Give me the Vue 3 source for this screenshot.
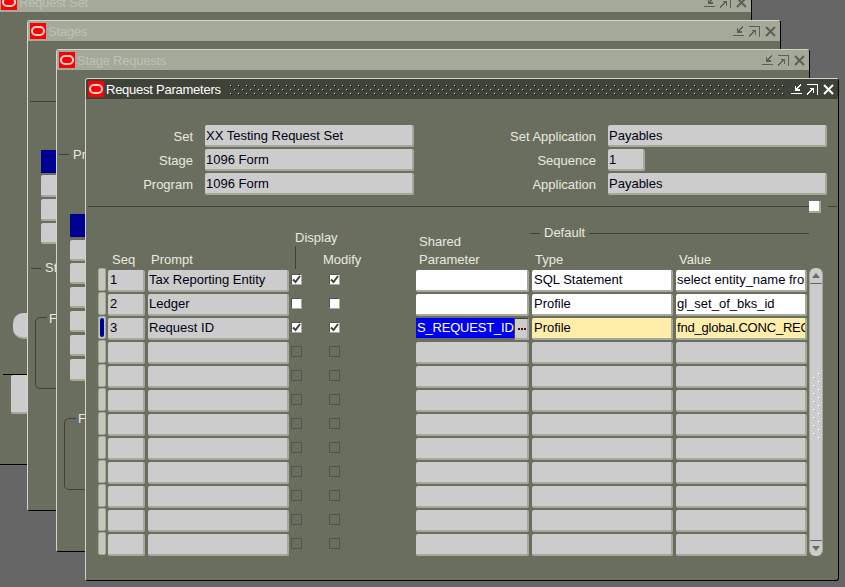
<template>
  <div class="desktop">
    <!-- windows stacked behind the active one -->
    <div v-for="win in backWindows" :key="win.title" class="window" :style="{ left: win.left + 'px', top: win.top + 'px', height: win.height + 'px' }">
      <div class="titlebar">
        <svg class="logo" width="16" height="16" viewBox="0 0 16 16"><rect width="16" height="16" fill="#ff0000" /><rect x="2" y="4" width="12" height="8" rx="4" fill="none" stroke="#ffd0d0" stroke-width="2" /></svg>
        <span class="title">{{ win.title }}</span>
        <div class="win-icons">
          <svg width="11" height="11" viewBox="0 0 11 11" shape-rendering="crispEdges"><path d="M0 9.5H11M10 0.5L5 5.5M4.5 2V6H8.5" fill="none" stroke="currentColor" stroke-width="1.4" /></svg>
          <svg width="11" height="11" viewBox="0 0 11 11" shape-rendering="crispEdges"><path d="M0 .5H10.5V11M0 10.5L6 4.5M2.5 4.5H6.5V8.5" fill="none" stroke="currentColor" stroke-width="1.4" /></svg>
          <svg width="11" height="11" viewBox="0 0 11 11"><path d="M1 1L10 10M10 1L1 10" fill="none" stroke="currentColor" stroke-width="2" /></svg>
        </div>
      </div>
      <div v-for="(bit, i) in win.bits" :key="i" :class="['bit', bit.kind]" :style="bitStyle(win, bit)">{{ bit.text }}</div>
    </div>

    <!-- active window -->
    <div class="window active">
      <div class="titlebar">
        <svg class="logo" width="16" height="16" viewBox="0 0 16 16"><rect width="16" height="16" fill="#ff0000" /><rect x="2" y="4" width="12" height="8" rx="4" fill="none" stroke="#ffd0d0" stroke-width="2" /></svg>
        <span class="title">Request Parameters</span>
        <svg class="drag-dots" height="11" shape-rendering="crispEdges">
          <defs>
            <pattern id="dragDots" width="8" height="8" patternUnits="userSpaceOnUse">
              <rect x="0" y="1" width="1" height="1" fill="#d8dacf" />
              <rect x="1" y="2" width="1" height="1" fill="#16170f" />
              <rect x="4" y="5" width="1" height="1" fill="#d8dacf" />
              <rect x="5" y="6" width="1" height="1" fill="#16170f" />
            </pattern>
          </defs>
          <rect width="100%" height="100%" fill="url(#dragDots)" />
        </svg>
        <div class="win-icons">
          <svg width="11" height="11" viewBox="0 0 11 11" shape-rendering="crispEdges"><path d="M0 9.5H11M10 0.5L5 5.5M4.5 2V6H8.5" fill="none" stroke="currentColor" stroke-width="1.4" /></svg>
          <svg width="11" height="11" viewBox="0 0 11 11" shape-rendering="crispEdges"><path d="M0 .5H10.5V11M0 10.5L6 4.5M2.5 4.5H6.5V8.5" fill="none" stroke="currentColor" stroke-width="1.4" /></svg>
          <svg width="11" height="11" viewBox="0 0 11 11"><path d="M1 1L10 10M10 1L1 10" fill="none" stroke="currentColor" stroke-width="2" /></svg>
        </div>
      </div>

      <div class="summary">
        <template v-for="row in summary" :key="row.label">
          <label class="prompt-label">{{ row.label }}</label>
          <div class="field">{{ row.value }}</div>
          <label class="prompt-label">{{ row.label2 }}</label>
          <div :class="['field', { short: row.short }]">{{ row.value2 }}</div>
        </template>
      </div>

      <div class="divider">
        <span class="divider-line"></span>
        <span class="divider-box"></span>
        <span class="divider-end"></span>
      </div>

      <div class="heads">
        <span class="head head-seq">Seq</span>
        <span class="head head-prompt">Prompt</span>
        <div class="head head-display">
          <span>Display</span>
          <i class="drop-line"></i>
        </div>
        <span class="head head-modify">Modify</span>
        <span class="head head-shared">Shared<br />Parameter</span>
        <div class="head head-default">
          <i class="rule short-rule"></i>
          <span>Default</span>
          <i class="rule"></i>
        </div>
        <span class="head head-type">Type</span>
        <span class="head head-value">Value</span>
      </div>

      <div class="table-wrap">
        <div class="table">
          <template v-for="(row, i) in rows" :key="i">
            <div :class="['indicator', { current: row.current }]"><i></i></div>
            <div class="field cell">{{ row.seq }}</div>
            <div class="field cell cell-prompt">{{ row.prompt }}</div>
            <div :class="['check', { off: !row.seq, ticked: row.display }]">
              <svg v-if="row.display" width="9" height="9" viewBox="0 0 9 9"><path d="M1 4.5L3.5 7L8 1" fill="none" stroke="#404238" stroke-width="2" /></svg>
            </div>
            <div :class="['check', { off: !row.seq, ticked: row.modify }]">
              <svg v-if="row.modify" width="9" height="9" viewBox="0 0 9 9"><path d="M1 4.5L3.5 7L8 1" fill="none" stroke="#404238" stroke-width="2" /></svg>
            </div>
            <div v-if="row.current" class="shared-edit">
              <span class="selected">{{ row.shared }}</span>
              <span class="lov">
                <svg width="9" height="3" viewBox="0 0 9 3" shape-rendering="crispEdges"><path d="M1 1h2v2h-2zM4 1h2v2h-2zM7 1h2v2h-2z" fill="#660000" /></svg>
              </span>
            </div>
            <div v-else :class="['field', 'cell', { live: row.seq }]"></div>
            <div :class="['field', 'cell', { live: row.seq, hot: row.current }]">{{ row.type }}</div>
            <div :class="['field', 'cell', 'cell-value', { live: row.seq, hot: row.current }]">{{ row.value }}</div>
          </template>
        </div>

        <div class="scrollbar">
          <div class="scroll-btn up"><i class="arrow-up"></i></div>
          <div class="scroll-track">
            <svg class="grip" width="10" height="68" shape-rendering="crispEdges">
              <defs>
                <pattern id="gripDots" width="10" height="8" patternUnits="userSpaceOnUse">
                  <rect x="5" y="0" width="2" height="2" fill="#f4f4f4" />
                  <rect x="6" y="1" width="1" height="1" fill="#8c8c8c" />
                  <rect x="0" y="4" width="2" height="2" fill="#f4f4f4" />
                  <rect x="1" y="5" width="1" height="1" fill="#8c8c8c" />
                </pattern>
              </defs>
              <rect width="100%" height="100%" fill="url(#gripDots)" />
            </svg>
          </div>
          <div class="scroll-btn down"><i class="arrow-down"></i></div>
        </div>
      </div>
    </div>
  </div>
</template>

<script setup>
const backWindows = [
  {
    title: 'Request Set', left: -2, top: -9, height: 474,
    bits: [
      { kind: 'field round', x: 13, y: 313, w: 40, h: 26 },
      { kind: 'blackline', x: 3, y: 374, w: 60, h: 1 },
      { kind: 'field', x: 11, y: 375, w: 40, h: 39 }
    ]
  },
  {
    title: 'Stages', left: 27, top: 20, height: 491,
    bits: [
      { kind: 'line', x: 30, y: 101, w: 40, h: 1 },
      { kind: 'blue', x: 41, y: 150, w: 40, h: 23 },
      { kind: 'field', x: 41, y: 175, w: 40, h: 22 },
      { kind: 'field', x: 41, y: 199, w: 40, h: 22 },
      { kind: 'field', x: 41, y: 223, w: 40, h: 21 },
      { kind: 'line', x: 31, y: 268, w: 10, h: 1 },
      { kind: 'label', x: 43, y: 260, w: 20, h: 16, text: 'St' },
      { kind: 'frame', x: 35, y: 317, w: 60, h: 72 },
      { kind: 'label', x: 47, y: 311, w: 20, h: 16, text: 'F' }
    ]
  },
  {
    title: 'Stage Requests', left: 56, top: 49, height: 503,
    bits: [
      { kind: 'line', x: 59, y: 154, w: 10, h: 1 },
      { kind: 'label', x: 71, y: 147, w: 20, h: 16, text: 'Pr' },
      { kind: 'blue', x: 70, y: 214, w: 40, h: 23 },
      { kind: 'field', x: 70, y: 240, w: 40, h: 21 },
      { kind: 'field', x: 70, y: 263, w: 40, h: 21 },
      { kind: 'field', x: 70, y: 287, w: 40, h: 21 },
      { kind: 'field', x: 70, y: 311, w: 40, h: 21 },
      { kind: 'field', x: 70, y: 335, w: 40, h: 21 },
      { kind: 'field', x: 70, y: 359, w: 40, h: 22 },
      { kind: 'frame', x: 64, y: 418, w: 60, h: 72 },
      { kind: 'label', x: 76, y: 411, w: 20, h: 16, text: 'F' }
    ]
  }
]

// bits are noted in page coordinates, the window border is 1px
function bitStyle(win, bit) {
  return {
    left: bit.x - win.left - 1 + 'px',
    top: bit.y - win.top - 1 + 'px',
    width: bit.w + 'px',
    height: bit.h + 'px'
  }
}

const summary = [
  { label: 'Set', value: 'XX Testing Request Set', label2: 'Set Application', value2: 'Payables' },
  { label: 'Stage', value: '1096 Form', label2: 'Sequence', value2: '1', short: true },
  { label: 'Program', value: '1096 Form', label2: 'Application', value2: 'Payables' }
]

const filled = [
  { seq: '1', prompt: 'Tax Reporting Entity', display: true, modify: true, type: 'SQL Statement', value: 'select entity_name from' },
  { seq: '2', prompt: 'Ledger', display: false, modify: false, type: 'Profile', value: 'gl_set_of_bks_id' },
  { seq: '3', prompt: 'Request ID', display: true, modify: true, shared: 'S_REQUEST_ID', type: 'Profile', value: 'fnd_global.CONC_REQUEST_ID', current: true }
]

const rows = [...filled, ...Array.from({ length: 9 }, () => ({}))]
</script>

<style>
html, body {
  margin: 0;
  background: #666666;
}
</style>

<style scoped>
.desktop {
  position: relative;
  width: 845px;
  height: 587px;
  overflow: hidden;
  background: #666666;
  font-family: "Liberation Sans", Arial, sans-serif;
  font-size: 13px;
  color: #e8eae0;
}

.window {
  position: absolute;
  width: 754px;
  box-sizing: border-box;
  overflow: hidden;
  background: #6a6e5e;
  border-top: 1px solid #d2d5ca;
  border-left: 1px solid #d2d5ca;
  border-right: 1px solid #000;
  border-bottom: 1px solid #000;
  border-radius: 3px;
}

.window.active {
  left: 85px;
  top: 78px;
  height: 503px;
}

.titlebar {
  display: flex;
  align-items: center;
  height: 20px;
  padding-left: 2px;
  background: #a5a99a;
  color: #5c6052;
}

.active .titlebar {
  background: #3f4238;
  color: #fff;
}

.logo {
  flex: none;
}

.title {
  margin-left: 2px;
  color: #bec1b4;
  white-space: nowrap;
  letter-spacing: -0.25px;
}

.active .title {
  flex: none;
  width: 114px;
  color: #fff;
}

.drag-dots {
  flex: 1;
  min-width: 0;
  margin: 0 6px 0 10px;
}

.win-icons {
  display: flex;
  gap: 5px;
  margin-left: auto;
  margin-right: 4px;
}

.bit {
  position: absolute;
}

.bit.label {
  padding-left: 2px;
  line-height: 16px;
  color: #e8eae0;
  background: #6a6e5e;
}

.bit.line {
  background: #3f4238;
}

.bit.blackline {
  background: #000;
}

.bit.blue {
  background: #000090;
}

.bit.frame {
  box-sizing: border-box;
  border: 1px solid #3f4238;
  border-radius: 5px;
}

.bit.round {
  border-radius: 10px;
}

.field {
  box-sizing: border-box;
  height: 22px;
  padding: 0 0 2px 2px;
  overflow: hidden;
  white-space: nowrap;
  line-height: 20px;
  color: #000010;
  background: #cccccc;
  border-right: 2px solid #a5a99a;
  border-bottom: 2px solid #a5a99a;
  border-radius: 2px;
}

.summary {
  display: grid;
  grid-template-columns: 107px 209px 170px 219px;
  column-gap: 12px;
  row-gap: 2px;
  align-items: center;
  margin-top: 26px;
}

.summary .field {
  line-height: 21px;
  padding-left: 1px;
}

.prompt-label {
  text-align: right;
}

.short {
  width: 37px;
}

.divider {
  display: flex;
  align-items: center;
  margin-top: 5px;
  height: 13px;
  padding-left: 2px;
}

.divider-line {
  width: 721px;
  height: 1px;
  background: #3f4238;
}

.divider-box {
  box-sizing: border-box;
  width: 12px;
  height: 12px;
  background: #fff;
  border-right: 2px solid #a5a99a;
  border-bottom: 2px solid #a5a99a;
}

.divider-end {
  width: 9px;
  height: 1px;
  margin-left: 7px;
  background: #3f4238;
}

.heads,
.table {
  display: grid;
  grid-template-columns: 10px 40px 143px 38px 87px 116px 144px 133px;
}

.heads {
  grid-template-rows: 22px 22px;
  margin: 13px 0 0 12px;
}

.head {
  line-height: 16px;
  white-space: nowrap;
}

.head-seq,
.head-prompt,
.head-modify,
.head-type,
.head-value {
  grid-row: 2;
  align-self: end;
  padding-bottom: 2px;
}

.head-seq {
  grid-column: 2;
  padding-left: 4px;
}

.head-prompt {
  grid-column: 3;
  padding-left: 3px;
}

.head-display {
  grid-column: 4;
  grid-row: 1 / 3;
  display: flex;
  flex-direction: column;
  padding: 4px 0 0 4px;
}

.drop-line {
  flex: 1;
  width: 1px;
  margin-bottom: 1px;
  background: #3f4238;
}

.head-modify {
  grid-column: 5;
  margin-left: -6px;
}

.head-shared {
  grid-column: 6;
  grid-row: 1 / 3;
  align-self: end;
  padding: 0 0 1px 3px;
  line-height: 18px;
}

.head-default {
  grid-column: 7 / 9;
  grid-row: 1;
  display: flex;
  align-items: center;
  align-self: start;
  gap: 4px;
  margin-left: -2px;
  height: 14px;
}

.rule {
  flex: 1;
  height: 1px;
  background: #3f4238;
}

.short-rule {
  flex: none;
  width: 10px;
}

.head-type {
  grid-column: 7;
  padding-left: 3px;
}

.head-value {
  grid-column: 8;
  padding-left: 3px;
}

.table-wrap {
  display: flex;
  margin-left: 12px;
}

.table {
  grid-auto-rows: 22px;
  row-gap: 2px;
}

.cell {
  margin-right: 3px;
}

.cell-prompt,
.cell-value {
  margin-right: 2px;
  padding-left: 1px;
}

.live {
  background: #fff;
}

.hot {
  background: #ffeeaa;
}

.cell-value.hot {
  letter-spacing: -0.2px;
}

.indicator {
  box-sizing: border-box;
  width: 8px;
  height: 23px;
  margin-top: -2px;
  padding: 1px;
  background: #c4c7bc;
  border: 1px solid #a5a99a;
  border-radius: 2px;
}

.indicator i {
  display: block;
  height: 100%;
  border-radius: 2px;
}

.indicator.current i {
  background: #000090;
}

.check {
  box-sizing: border-box;
  width: 11px;
  height: 11px;
  margin-top: 4px;
  background: #fff;
  border-top: 1px solid #555;
  border-left: 1px solid #555;
  border-right: 1px solid #a5a99a;
  border-bottom: 1px solid #a5a99a;
}

.check svg {
  display: block;
}

.check.off {
  background: transparent;
  border-color: #50544a;
}

.shared-edit {
  display: flex;
  margin-right: 3px;
}

.selected {
  flex: 1;
  min-width: 0;
  height: 20px;
  padding-left: 1px;
  overflow: hidden;
  white-space: nowrap;
  line-height: 19px;
  letter-spacing: -0.2px;
  color: #fff;
  background: #0000f0;
}

.lov {
  display: flex;
  align-items: center;
  justify-content: center;
  box-sizing: border-box;
  width: 15px;
  height: 22px;
  background: #cccccc;
  border-top: 1px solid #404238;
  border-left: 1px solid #404238;
  border-right: 2px solid #a5a99a;
  border-bottom: 2px solid #a5a99a;
}

.scrollbar {
  display: flex;
  flex-direction: column;
  box-sizing: border-box;
  width: 14px;
  height: 288px;
  margin-top: -2px;
  background: #cccccc;
  border-left: 1px solid #a5a99a;
  border-right: 1px solid #a5a99a;
  border-radius: 6px;
}

.scroll-btn {
  flex: none;
  display: flex;
  align-items: center;
  justify-content: center;
  height: 15px;
}

.scroll-btn.up {
  border-bottom: 1px solid #6a6e5e;
}

.scroll-btn.down {
  border-top: 1px solid #6a6e5e;
}

.arrow-up,
.arrow-down {
  width: 0;
  height: 0;
  border-left: 4px solid transparent;
  border-right: 4px solid transparent;
}

.arrow-up {
  border-bottom: 5px solid #6a6e5e;
}

.arrow-down {
  border-top: 5px solid #6a6e5e;
}

.scroll-track {
  flex: 1;
  padding-top: 89px;
  padding-left: 3px;
}

.grip {
  display: block;
}
</style>
